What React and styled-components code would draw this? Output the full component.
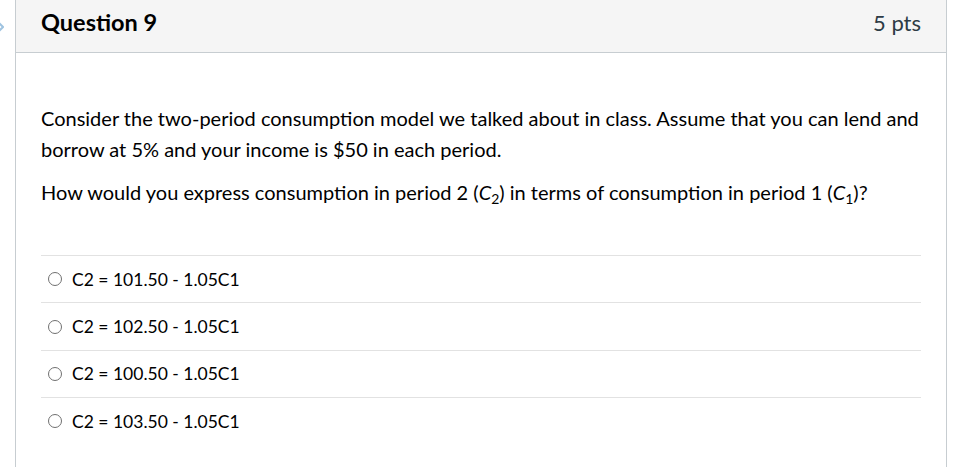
import React from "react"
import styled, { createGlobalStyle } from "styled-components"

const GlobalStyle = createGlobalStyle`
  html, body {
    margin: 0;
    padding: 0;
    background: #ffffff;
  }
  body {
    font-family: Lato, "Noto Sans", sans-serif;
    color: #2d3b45;
    overflow: hidden;
  }
`

const answers = [
  "C2 = 101.50 - 1.05C1",
  "C2 = 102.50 - 1.05C1",
  "C2 = 100.50 - 1.05C1",
  "C2 = 103.50 - 1.05C1",
]

const App = () => {
  return (
    <>
      <GlobalStyle />
      <Page>
        <Marker>
          <svg width="6" height="12" viewBox="0 0 6 12">
            <path d="M0 1 L5 6 L0 11" fill="none" stroke="#9fc3e0" strokeWidth="2" />
          </svg>
        </Marker>
        <Card>
          <Header>
            <Title>Question 9</Title>
            <Points>5 pts</Points>
          </Header>
          <Body>
            <Text>
              Consider the two-period consumption model we talked about in class. Assume that you can lend and
              borrow at 5% and your income is $50 in each period.
            </Text>
            <Text>
              How would you express consumption in period 2 (<i>C</i><sub>2</sub>) in terms of consumption in period 1 (<i>C</i><sub>1</sub>)?
            </Text>
            <Answers>
              {answers.map((a, i) => (
                <Answer key={i}>
                  <Radio />
                  <AnswerLabel>{a}</AnswerLabel>
                </Answer>
              ))}
            </Answers>
          </Body>
        </Card>
      </Page>
    </>
  )
}

export default App

const Page = styled.div`
  position: relative;
  height: 467px;
  padding-left: 15px;
  padding-right: 18px;
`

const Marker = styled.div`
  position: absolute;
  left: -2px;
  top: 17px;
`

const Card = styled.div`
  border-left: 1px solid #c7cdd1;
  border-right: 1px solid #c7cdd1;
  height: 467px;
  box-sizing: border-box;
`

const Header = styled.div`
  height: 53px;
  box-sizing: border-box;
  background: #f5f5f5;
  border-bottom: 1px solid #c7cdd1;
  display: flex;
  align-items: center;
  justify-content: space-between;
  padding: 0 25px 8px 25px;
`

const Title = styled.div`
  font-size: 23.5px;
  font-weight: 700;
  color: #000000;
`

const Points = styled.div`
  font-size: 22px;
  color: #2d3b45;
`

const Body = styled.div`
  padding: 50px 25px 0 25px;
`

const Text = styled.p`
  margin: 0 0 12px 0;
  font-size: 20px;
  line-height: 31px;
  color: #000000;

  i {
    font-style: italic;
  }

  sub {
    font-size: 14px;
    vertical-align: -4px;
    line-height: 0;
  }
`

const Answers = styled.div`
  margin-top: 47px;
  border-top: 1px solid #e2e2e2;
`

const Answer = styled.div`
  height: 46.4px;
  display: flex;
  align-items: center;
  padding-left: 7px;
  border-bottom: 1px solid #e2e2e2;

  &:last-child {
    border-bottom: none;
  }
`

const Radio = styled.span`
  width: 14px;
  height: 14px;
  box-sizing: border-box;
  border: 1.5px solid #707070;
  border-radius: 50%;
  margin-right: 10px;
`

const AnswerLabel = styled.span`
  font-size: 17.5px;
  color: #000000;
`
